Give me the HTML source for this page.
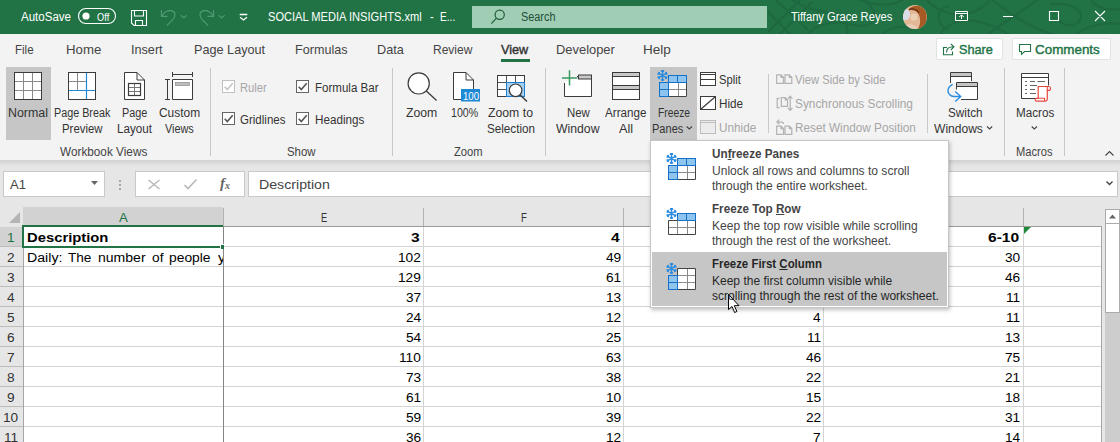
<!DOCTYPE html>
<html><head><meta charset="utf-8">
<style>
*{box-sizing:border-box;margin:0;padding:0}
html,body{width:1120px;height:442px;overflow:hidden;background:#f3f3f3;font-family:"Liberation Sans",sans-serif}
.a{position:absolute}
.x{position:absolute;white-space:nowrap;line-height:20px;transform-origin:0 0}
svg{position:absolute;left:0;top:0}
</style></head><body>
<!-- blocks -->
<div class="a" style="left:0;top:0;width:1120px;height:34px;background:#217346"></div>
<div class="a" style="left:472px;top:6px;width:295px;height:22px;background:#a0ceb5"></div>
<div class="a" style="left:0;top:34px;width:1120px;height:126px;background:#f3f3f3"></div>
<div class="a" style="left:501px;top:59px;width:29px;height:3px;background:#217346"></div>
<div class="a" style="left:936px;top:38px;width:67px;height:22px;background:#fff;border:1px solid #e2e2e2;border-radius:2px"></div>
<div class="a" style="left:1012px;top:38px;width:99px;height:22px;background:#fff;border:1px solid #e2e2e2;border-radius:2px"></div>
<div class="a" style="left:6px;top:67px;width:45px;height:73px;background:#c6c6c6"></div>
<div class="a" style="left:650px;top:67px;width:47px;height:73px;background:#c6c6c6"></div>
<!-- formula bar area -->
<div class="a" style="left:0;top:160px;width:1120px;height:282px;background:#e6e6e6"></div>
<div class="a" style="left:0;top:160px;width:1120px;height:6px;background:linear-gradient(#d0d0d0,#e6e6e6)"></div>
<div class="a" style="left:3px;top:171px;width:102px;height:26px;background:#fff;border:1px solid #c9c9c9"></div>
<div class="a" style="left:135px;top:171px;width:110px;height:26px;background:#fff;border:1px solid #c9c9c9"></div>
<div class="a" style="left:248px;top:171px;width:870px;height:26px;background:#fff;border:1px solid #c9c9c9"></div>
<!-- grid -->
<div class="a" id="grid" style="left:24px;top:227px;width:1078px;height:215px;background:#fff"></div>
<div class="a" style="left:23px;top:207px;width:200px;height:19px;background:#d2d2d2"></div>
<div class="a" style="left:0;top:227px;width:23px;height:19px;background:#d2d2d2"></div>
<div class="a" style="left:24px;top:246px;width:1077px;height:1px;background:#d4d4d4"></div>
<div class="a" style="left:0px;top:246px;width:23px;height:1px;background:#bcbcbc"></div>
<div class="a" style="left:24px;top:266px;width:1077px;height:1px;background:#d4d4d4"></div>
<div class="a" style="left:0px;top:266px;width:23px;height:1px;background:#bcbcbc"></div>
<div class="a" style="left:24px;top:286px;width:1077px;height:1px;background:#d4d4d4"></div>
<div class="a" style="left:0px;top:286px;width:23px;height:1px;background:#bcbcbc"></div>
<div class="a" style="left:24px;top:306px;width:1077px;height:1px;background:#d4d4d4"></div>
<div class="a" style="left:0px;top:306px;width:23px;height:1px;background:#bcbcbc"></div>
<div class="a" style="left:24px;top:326px;width:1077px;height:1px;background:#d4d4d4"></div>
<div class="a" style="left:0px;top:326px;width:23px;height:1px;background:#bcbcbc"></div>
<div class="a" style="left:24px;top:346px;width:1077px;height:1px;background:#d4d4d4"></div>
<div class="a" style="left:0px;top:346px;width:23px;height:1px;background:#bcbcbc"></div>
<div class="a" style="left:24px;top:366px;width:1077px;height:1px;background:#d4d4d4"></div>
<div class="a" style="left:0px;top:366px;width:23px;height:1px;background:#bcbcbc"></div>
<div class="a" style="left:24px;top:386px;width:1077px;height:1px;background:#d4d4d4"></div>
<div class="a" style="left:0px;top:386px;width:23px;height:1px;background:#bcbcbc"></div>
<div class="a" style="left:24px;top:406px;width:1077px;height:1px;background:#d4d4d4"></div>
<div class="a" style="left:0px;top:406px;width:23px;height:1px;background:#bcbcbc"></div>
<div class="a" style="left:24px;top:426px;width:1077px;height:1px;background:#d4d4d4"></div>
<div class="a" style="left:0px;top:426px;width:23px;height:1px;background:#bcbcbc"></div>
<div class="a" style="left:423px;top:227px;width:1px;height:215px;background:#d4d4d4"></div>
<div class="a" style="left:423px;top:208px;width:1px;height:18px;background:#b2b2b2"></div>
<div class="a" style="left:623px;top:227px;width:1px;height:215px;background:#d4d4d4"></div>
<div class="a" style="left:623px;top:208px;width:1px;height:18px;background:#b2b2b2"></div>
<div class="a" style="left:823px;top:227px;width:1px;height:215px;background:#d4d4d4"></div>
<div class="a" style="left:823px;top:208px;width:1px;height:18px;background:#b2b2b2"></div>
<div class="a" style="left:1023px;top:227px;width:1px;height:215px;background:#d4d4d4"></div>
<div class="a" style="left:1023px;top:208px;width:1px;height:18px;background:#b2b2b2"></div>
<div class="a" style="left:23px;top:227px;width:1px;height:215px;background:#a6a6a6"></div>
<div class="a" style="left:22px;top:226px;width:1080px;height:1px;background:#9b9b9b"></div>
<div class="a" style="left:1101px;top:226px;width:1px;height:216px;background:#a6a6a6"></div>
<div class="a" style="left:223px;top:208px;width:1px;height:18px;background:#b2b2b2"></div>
<div class="a" style="left:22px;top:225px;width:201px;height:23px;border:2px solid #217346;border-right:0"></div>
<div class="a" style="left:223px;top:227px;width:1px;height:215px;background:#868686"></div>
<div class="a" style="left:220px;top:244px;width:4px;height:5px;background:#fff"></div>
<div class="a" style="left:221px;top:245px;width:3px;height:4px;background:#217346"></div>
<svg width="8" height="8" style="left:1024px;top:227px"><path d="M0 0H7L0 7Z" fill="#1e8a3c"/></svg>
<div class="a" style="left:1105px;top:209px;width:15px;height:15px;background:#fff;border:1px solid #ababab"></div>
<div class="a" style="left:1105px;top:224px;width:15px;height:89px;background:#fff;border:1px solid #ababab;border-top:0"></div>
<div class="a" style="left:1105px;top:313px;width:15px;height:129px;background:#cdcdcd"></div>
<svg width="1120" height="442" viewBox="0 0 1120 442" fill="none" stroke-linecap="butt">
<defs><clipPath id="tb"><rect x="768" y="0" width="352" height="34"/></clipPath></defs><g clip-path="url(#tb)" stroke="#1b6039" stroke-opacity="0.5" stroke-width="2.2" fill="none"><path d="M764 36L802 -2M778 36L812 2M764 8L792 36M774 -2L808 30M790 -2C800 6 812 10 826 12C845 15 850 28 846 36M806 36C815 24 835 20 850 24C870 30 880 20 872 8C868 2 858 -2 850 -2M880 36C890 26 905 24 912 30M860 -2C875 8 895 6 905 -2M925 -2C935 10 950 16 965 14C985 11 990 -2 990 -2M940 36C945 22 965 18 980 22C1000 27 1010 36 1010 36M948 30C935 24 935 8 950 6M990 -2C1005 10 1030 30 1060 36M1040 -2C1020 12 1000 26 985 36M1050 4C1070 2 1085 10 1080 20C1076 28 1060 26 1058 18M1075 36C1085 26 1100 22 1122 24M1090 -2C1095 8 1110 12 1122 8"/></g>
<g stroke="#fff" stroke-width="1.1">
<rect x="78.5" y="8.5" width="37" height="15" rx="7.5"/>
<circle cx="86" cy="16" r="3.6" fill="#fff" stroke="none"/>
<path d="M131.5 10.5H146.5V25.5H134L131.5 23Z"/><path d="M134.5 10.5V16H143.5V10.5M135.5 25.5V20.5H142.5V25.5"/>
<path d="M239.7 14.5H247.3M240 17.3L243.5 20L247 17.3" stroke-width="1.3"/>
<path d="M1003 16.5H1013M1049.5 11.5H1058.5V20.5H1049.5ZM1095 11L1105 21M1105 11L1095 21"/>
<path d="M955.5 11.5H967.5V20.5H955.5ZM955.5 13.5H967.5M961.5 19V15M959.3 17L961.5 14.8L963.7 17" stroke-width="1"/>
</g>
<g stroke="#4f9a73" stroke-width="1.2">
<path d="M161.5 10.3V16.3H167.5M162 16C164 12.5 167 10.6 170 10.6C173.2 10.6 175 12.6 175 15C175 17 174 18.2 172.5 19.8L166.8 25.6"/>
<path d="M180.8 15.4L183.8 17.8L186.8 15.4"/>
<path d="M213.5 10.3V16.3H207.5M213 16C211 12.5 208 10.6 205 10.6C201.8 10.6 200 12.6 200 15C200 17 201 18.2 202.5 19.8L208.2 25.6"/>
<path d="M218.7 15.4L221.7 17.8L224.7 15.4"/>
</g>
<g stroke="#1e5c3a" stroke-width="1.2"><circle cx="499.7" cy="14.8" r="4.6"/><path d="M496.5 18.2L491.3 23.6"/></g>
<defs><clipPath id="avc"><circle cx="915" cy="17" r="12"/></clipPath></defs>
<g clip-path="url(#avc)"><rect x="903" y="5" width="24" height="24" fill="#e2b896"/><path d="M909 9C912 5 921 4 925 10C928 15 927 24 922 29L918 29C921 24 921 16 917 12C914 10 911 10 909 9Z" fill="#a85a24"/><path d="M903 8C906 8 910 10 910 15C910 19 906 21 903 20Z" fill="#d9dde8"/><path d="M905 26C909 23 915 24 918 29H905Z" fill="#eacdb8"/><circle cx="914" cy="17" r="3.500" fill="#edd0b4"/><path d="M909 10C912 8 917 9 919 13" stroke="#5a2a14" stroke-width="1.2" fill="none"/></g>
<g stroke="#217346" stroke-width="1.1"><path d="M947 47.500H943.500V54.700H952.500V51.500M946.500 52.500C946.500 48.500 949.500 46.800 953.500 46.800M950.800 43.800L954 46.800L950.800 50"/>
<path d="M1019.500 44.500H1030.500V51.500H1024.500L1021.500 54.300V51.500H1019.500Z"/></g>
<g stroke="#c8c8c8" stroke-width="1">
<path d="M210.5 68V156"/>
<path d="M392.5 68V156"/>
<path d="M545.5 68V156"/>
<path d="M1004.5 68V156"/>
<path d="M1064.5 68V156"/>
<path d="M768.5 74V133"/>
<path d="M927.5 74V133"/>
</g>
<path d="M1105.5 155.5L1109.5 151.5L1113.5 155.5" stroke="#444" stroke-width="1.1"/>
<rect x="14.5" y="72.5" width="27" height="27" fill="#fff" stroke="#3b3b3b"/><path d="M23.5 73V99M32.5 73V99M15 81.5H41M15 90.5H41" stroke="#8a8a8a"/>
<rect x="68.5" y="72.5" width="27" height="27" fill="#fff" stroke="#3b3b3b"/><path d="M77.5 73V90M69 81.5H86" stroke="#8a8a8a"/><path d="M86.5 73V99M69 90.5H95" stroke="#1e8ad6" stroke-width="1.2"/>
<path d="M124.5 72.5H137L144.5 80V99.5H124.5Z" fill="#fff" stroke="#3b3b3b"/><path d="M137 72.5V80H144.5" stroke="#3b3b3b"/><path d="M134.500 84V95M129 87.500H140M129 91.500H140" stroke="#777"/><rect x="128.500" y="83.500" width="12" height="12" stroke="#3b3b3b" stroke-width="1.2"/>
<path d="M172.5 79.5H192.5V99.5H172.5Z" fill="#fff" stroke="#3b3b3b"/><rect x="175.500" y="82.500" width="14" height="3" fill="#bdbdbd" stroke="#8a8a8a" stroke-width="0.7"/><path d="M172.500 74.500H192.500M172.500 72V77M192.500 72V77M167.500 79.500V99.500M165 79.500H170M165 99.500H170" stroke="#3b3b3b"/>
<rect x="222.5" y="80.5" width="12" height="12" fill="#fff" stroke="#c0c0c0"/><path d="M224.7 86.7L227.3 89.5L232.7 83.2" stroke="#c4c4c4" stroke-width="1.6"/>
<rect x="296.5" y="80.5" width="12" height="12" fill="#fff" stroke="#666"/><path d="M298.7 86.7L301.3 89.5L306.7 83.2" stroke="#555" stroke-width="1.6"/>
<rect x="222.5" y="112.5" width="12" height="12" fill="#fff" stroke="#666"/><path d="M224.7 118.7L227.3 121.5L232.7 115.2" stroke="#555" stroke-width="1.6"/>
<rect x="296.5" y="112.5" width="12" height="12" fill="#fff" stroke="#666"/><path d="M298.7 118.7L301.3 121.5L306.7 115.2" stroke="#555" stroke-width="1.6"/>
<circle cx="418.7" cy="83.4" r="10.6" fill="#fff" stroke="#3b3b3b" stroke-width="1.2"/><path d="M426.3 91L436.6 100.6" stroke="#3b3b3b" stroke-width="1.3"/>
<path d="M453.500 72.500H466L473.5 80V99.500H453.500Z" fill="#fff" stroke="#3b3b3b"/><path d="M466 72.500V80H473.5" stroke="#3b3b3b"/><rect x="461" y="89" width="19" height="12.5" fill="#1e8ad6"/>
<rect x="497.5" y="75.5" width="27" height="21" fill="#fff" stroke="#3b3b3b"/><path d="M506.500 76V96M515.500 76V82M498 82.500H507M498 89.500H507" stroke="#3b3b3b" stroke-width="0.9"/><rect x="506.500" y="82.500" width="18" height="14" fill="#a6d0f2" stroke="#1e7fd0"/><circle cx="515.6" cy="90.3" r="6.3" fill="#fff" stroke="#3b3b3b" stroke-width="1.2"/><path d="M520.200 95L527 101.600" stroke="#3b3b3b" stroke-width="1.4"/>
<path d="M577 76.500H591.5V96.500H564.5V83" stroke="#3b3b3b" fill="#fff"/><rect x="578.500" y="75" width="13" height="4" fill="#c8c8c8" stroke="#3b3b3b"/><path d="M569.500 70.200V85.400M562 78H577.500" stroke="#3a9a62" stroke-width="1.5"/>
<rect x="612.5" y="72.5" width="27" height="27" fill="#fff" stroke="#3b3b3b"/><rect x="613" y="73" width="26" height="3.500" fill="#c8c8c8"/><rect x="613" y="85.500" width="26" height="3.500" fill="#c8c8c8"/><path d="M613 76.500H639M613 85.500H639M613 89.500H639" stroke="#3b3b3b"/>
<g transform="translate(0 0)"><rect x="669" y="82.5" width="18" height="14.500" fill="#fff"/><path d="M678.500 75.500V97M659.500 89.500H687M669 82.500H687M668.500 82.500V97" stroke="#8a8a8a"/><path d="M659.500 82.500V96.500H686.500V75.500H668.500V82.500Z" stroke="#444"/><rect x="668.500" y="75.500" width="18" height="7" fill="#8fc4ee" stroke="#1572c8"/><path d="M677.500 75.500V82.500" stroke="#1572c8"/><rect x="659.500" y="82.500" width="9" height="14" fill="#8fc4ee" stroke="#1572c8"/><path d="M659.500 89.500H668.500" stroke="#1572c8"/><path d="M662.50 70.10L662.50 80.90M657.82 72.80L667.18 78.20M667.18 72.80L657.82 78.20M665.62 77.30L667.40 76.65M665.62 77.30L665.95 79.17M662.50 79.10L663.96 80.32M662.50 79.10L661.04 80.32M659.38 77.30L659.05 79.17M659.38 77.30L657.60 76.65M659.38 73.70L657.60 74.35M659.38 73.70L659.05 71.83M662.50 71.90L661.04 70.68M662.50 71.90L663.96 70.68M665.62 73.70L665.95 71.83M665.62 73.70L667.40 74.35" stroke="#2b8ce0" stroke-width="1.5"/></g>
<rect x="700.5" y="72.5" width="15" height="13" fill="#fff" stroke="#3b3b3b"/><path d="M701 74.500H715M701 79.500H715" stroke="#3b3b3b"/>
<rect x="700.5" y="96.5" width="15" height="13" fill="#fff" stroke="#3b3b3b"/><path d="M701 109L715 97" stroke="#3b3b3b" stroke-width="1.2"/>
<rect x="700.5" y="120.5" width="15" height="13" fill="#ececec" stroke="#bdbdbd"/><path d="M701 122.500H715" stroke="#bdbdbd"/>
<g stroke="#b4b4b4" stroke-width="1.25"><path d="M776.7 74.8H781.0L783.5 77.3V83.39999999999999H776.7ZM781.0 74.8V77.3H783.5M785 74.8H789.3L791.8 77.3V83.39999999999999H785ZM789.3 74.8V77.3H791.8"/>
<path d="M779.500 98.400H777.200V107.600H779.500M781.3 97.6H785.3L787.5 99.8V106.39999999999999H781.3ZM785.3 97.6V99.8H787.5M790.200 96V110.600M788 98.600L790.200 96.200L792.400 98.600M788 108L790.200 110.400L792.400 108"/>
<path d="M776.7 126H781.0L783.5 128.5V134.4H776.7ZM781.0 126V128.5H783.5M785 126H789.3L791.8 128.5V134.4H785ZM789.3 126V128.5H791.8M777 122H781.500C783 122 783.500 122.800 783.500 124M779.300 119.600L776.900 122L779.300 124.400"/></g>
<path d="M950.500 83V72.500H971.500V81" fill="#fff" stroke="#3b3b3b"/><rect x="951" y="73" width="20" height="3" fill="#c4c4c4"/><path d="M951 76.500H971" stroke="#3b3b3b"/><rect x="956.500" y="82.500" width="21" height="17" fill="#fff" stroke="none"/><rect x="957" y="83" width="20" height="3" fill="#c4c4c4"/><path d="M956.500 89.500V82.500H977.500V99.500H961M957 86.500H977" stroke="#3b3b3b"/>
<path d="M952.600 84.400C949.500 86 948 88.500 948 90.800C948 94 950.500 96.500 954 96.500H960M955.300 91.500L960.700 96.500L955.300 101.400" stroke="#2b8ce0" stroke-width="1.4"/>
<path d="M686.600 126.500L689.300 129L692 126.500M987 126.500L989.600 129L992.200 126.500M1031.700 126.500L1034.300 129L1037 126.500" stroke="#444" stroke-width="1.1"/>
<rect x="1021.500" y="73.500" width="27" height="25" fill="#fff" stroke="none"/><path d="M1035 98.500H1021.500V73.500H1048.500V85.500M1022 77.500H1048" stroke="#3b3b3b"/><path d="M1025 81.500H1027M1030 81.500H1035M1037.500 81.500H1045M1025 85.500H1027M1030 85.500H1037M1025 89.500H1027M1030 89.500H1035M1025 93.500H1027M1030 93.500H1036" stroke="#666"/>
<path d="M1038.200 86.500H1049C1051 86.500 1051 90.400 1049 90.400H1047.300V99C1047.300 101.300 1044.500 101.200 1044.500 101.200H1036.500C1034.800 101.200 1034.800 98.300 1036.500 98.300H1038.200Z" fill="#fff" stroke="#e8463c" stroke-width="1.2"/><path d="M1038.200 98.300H1044.600V101M1047.300 86.700V90.400" stroke="#e8463c" stroke-width="1.1"/>
<path d="M91 181H98L94.500 185Z" fill="#666"/>
<path d="M119 180H121V182H119ZM119 184H121V186H119ZM119 188H121V190H119Z" fill="#a6a6a6"/>
<path d="M148.500 180L159.500 189M159.500 180L148.500 189" stroke="#b8b8b8" stroke-width="1.5"/>
<path d="M184.500 185L188 188.500L196.500 179.500" stroke="#b8b8b8" stroke-width="1.6"/>
<path d="M1106.500 181.500L1109.500 184.500L1112.500 181.500" stroke="#444" stroke-width="1.4"/>
<path d="M20 212V223H9Z" fill="#b4b4b4"/>
<path d="M1109 218.500H1116L1112.500 214.500Z" fill="#666"/>
</svg>
<div class="a" style="left:650px;top:140px;width:299px;height:168px;background:#fff;border:1px solid #c6c6c6;box-shadow:1px 2px 4px rgba(0,0,0,0.25)"></div>
<div class="a" style="left:652px;top:252px;width:295px;height:54px;background:#c6c6c6"></div>
<svg width="1120" height="442" viewBox="0 0 1120 442" fill="none">
<g transform="translate(9 83)"><rect x="669" y="82.5" width="18" height="14.500" fill="#fff"/><path d="M678.500 75.500V97M659.500 89.500H687M669 82.500H687M668.500 82.500V97" stroke="#8a8a8a"/><path d="M659.500 82.500V96.500H686.500V75.500H668.500V82.500Z" stroke="#444"/><rect x="668.500" y="75.500" width="18" height="7" fill="#8fc4ee" stroke="#1572c8"/><path d="M677.500 75.500V82.500" stroke="#1572c8"/><rect x="659.500" y="82.500" width="9" height="14" fill="#8fc4ee" stroke="#1572c8"/><path d="M659.500 89.500H668.500" stroke="#1572c8"/><path d="M662.50 70.10L662.50 80.90M657.82 72.80L667.18 78.20M667.18 72.80L657.82 78.20M665.62 77.30L667.40 76.65M665.62 77.30L665.95 79.17M662.50 79.10L663.96 80.32M662.50 79.10L661.04 80.32M659.38 77.30L659.05 79.17M659.38 77.30L657.60 76.65M659.38 73.70L657.60 74.35M659.38 73.70L659.05 71.83M662.50 71.90L661.04 70.68M662.50 71.90L663.96 70.68M665.62 73.70L665.95 71.83M665.62 73.70L667.40 74.35" stroke="#2b8ce0" stroke-width="1.5"/></g>
<g transform="translate(9 138)"><rect x="669" y="82.5" width="18" height="14.500" fill="#fff"/><rect x="659.500" y="82.500" width="9.500" height="14.500" fill="#fff"/><path d="M678.500 75.500V97M659.500 89.500H687M669 82.500H687M668.500 82.500V97" stroke="#8a8a8a"/><path d="M659.500 82.500V96.500H686.500V75.500H668.500V82.500Z" stroke="#444"/><rect x="668.500" y="75.500" width="18" height="7" fill="#8fc4ee" stroke="#1572c8"/><path d="M677.500 75.500V82.500" stroke="#1572c8"/><path d="M662.50 70.10L662.50 80.90M657.82 72.80L667.18 78.20M667.18 72.80L657.82 78.20M665.62 77.30L667.40 76.65M665.62 77.30L665.95 79.17M662.50 79.10L663.96 80.32M662.50 79.10L661.04 80.32M659.38 77.30L659.05 79.17M659.38 77.30L657.60 76.65M659.38 73.70L657.60 74.35M659.38 73.70L659.05 71.83M662.50 71.90L661.04 70.68M662.50 71.90L663.96 70.68M665.62 73.70L665.95 71.83M665.62 73.70L667.40 74.35" stroke="#2b8ce0" stroke-width="1.5"/></g>
<g transform="translate(9 193)"><rect x="669" y="82.5" width="18" height="14.500" fill="#fff"/><rect x="669" y="75.500" width="18" height="7" fill="#fff"/><path d="M678.500 75.500V97M659.500 89.500H687M669 82.500H687M668.500 82.500V97" stroke="#8a8a8a"/><path d="M659.500 82.500V96.500H686.500V75.500H668.500V82.500Z" stroke="#444"/><rect x="659.500" y="82.500" width="9" height="14" fill="#8fc4ee" stroke="#1572c8"/><path d="M659.500 89.500H668.500" stroke="#1572c8"/><path d="M662.50 70.10L662.50 80.90M657.82 72.80L667.18 78.20M667.18 72.80L657.82 78.20M665.62 77.30L667.40 76.65M665.62 77.30L665.95 79.17M662.50 79.10L663.96 80.32M662.50 79.10L661.04 80.32M659.38 77.30L659.05 79.17M659.38 77.30L657.60 76.65M659.38 73.70L657.60 74.35M659.38 73.70L659.05 71.83M662.50 71.90L661.04 70.68M662.50 71.90L663.96 70.68M665.62 73.70L665.95 71.83M665.62 73.70L667.40 74.35" stroke="#2b8ce0" stroke-width="1.5"/></g>
<path d="M728.500 294.300V309.500L732 306.500L734.600 312.500L736.900 311.500L734.300 305.700H739Z" fill="#fff" stroke="#000" stroke-width="1" stroke-linejoin="miter"/>
</svg>
<span class="x" style="left:21.00px;top:7.00px;font-size:12.5px;color:#ffffff;transform:scaleX(0.9216)">AutoSave</span>
<span class="x" style="left:97.00px;top:6.50px;font-size:11px;color:#ffffff;transform:scaleX(0.8434)">Off</span>
<span class="x" style="left:268.00px;top:7.00px;font-size:12.5px;color:#ffffff;transform:scaleX(0.8873)">SOCIAL MEDIA INSIGHTS.xml</span>
<span class="x" style="left:430.00px;top:7.00px;font-size:12.5px;color:#ffffff;transform:scaleX(0.8750)">-</span>
<span class="x" style="left:439.69px;top:7.00px;font-size:12.5px;color:#ffffff;transform:scaleX(0.8100)">E...</span>
<span class="x" style="left:521.00px;top:7.00px;font-size:12.5px;color:#1e4e36;transform:scaleX(0.8700)">Search</span>
<span class="x" style="left:790.60px;top:7.00px;font-size:12.5px;color:#ffffff;transform:scaleX(0.8948)">Tiffany Grace Reyes</span>
<span class="x" style="left:14.61px;top:40.00px;font-size:13px;color:#444444;transform:scaleX(0.8875)">File</span>
<span class="x" style="left:66.48px;top:40.00px;font-size:13px;color:#444444;transform:scaleX(1.0165)">Home</span>
<span class="x" style="left:131.03px;top:40.00px;font-size:13px;color:#444444;transform:scaleX(0.9718)">Insert</span>
<span class="x" style="left:193.53px;top:40.00px;font-size:13px;color:#444444;transform:scaleX(0.9739)">Page Layout</span>
<span class="x" style="left:294.53px;top:40.00px;font-size:13px;color:#444444;transform:scaleX(0.9688)">Formulas</span>
<span class="x" style="left:376.53px;top:40.00px;font-size:13px;color:#444444;transform:scaleX(0.9732)">Data</span>
<span class="x" style="left:433.08px;top:40.00px;font-size:13px;color:#444444;transform:scaleX(0.9234)">Review</span>
<span class="x" style="left:556.01px;top:40.00px;font-size:13px;color:#444444;transform:scaleX(0.9928)">Developer</span>
<span class="x" style="left:643.46px;top:40.00px;font-size:13px;color:#444444;transform:scaleX(1.0390)">Help</span>
<span class="x" style="left:501.20px;top:40.00px;font-size:13px;color:#333;transform:scaleX(0.9736);-webkit-text-stroke:0.4px #333">View</span>
<span class="x" style="left:959.20px;top:40.00px;font-size:13px;color:#217346;transform:scaleX(0.9750);-webkit-text-stroke:0.4px #217346">Share</span>
<span class="x" style="left:1035.20px;top:40.00px;font-size:13px;color:#217346;transform:scaleX(1.0308);-webkit-text-stroke:0.4px #217346">Comments</span>
<span class="x" style="left:8.20px;top:103.00px;font-size:12px;color:#333333;transform:scaleX(1.0341)">Normal</span>
<span class="x" style="left:53.50px;top:103.00px;font-size:12px;color:#333333;transform:scaleX(0.8979)">Page Break</span>
<span class="x" style="left:62.00px;top:119.00px;font-size:12px;color:#333333;transform:scaleX(0.9485)">Preview</span>
<span class="x" style="left:122.40px;top:103.00px;font-size:12px;color:#333333;transform:scaleX(0.9029)">Page</span>
<span class="x" style="left:117.00px;top:119.00px;font-size:12px;color:#333333;transform:scaleX(0.9702)">Layout</span>
<span class="x" style="left:158.50px;top:103.00px;font-size:12px;color:#333333;transform:scaleX(0.9940)">Custom</span>
<span class="x" style="left:164.80px;top:119.00px;font-size:12px;color:#333333;transform:scaleX(0.9059)">Views</span>
<span class="x" style="left:314.50px;top:78.00px;font-size:12px;color:#333333;transform:scaleX(0.9618)">Formula Bar</span>
<span class="x" style="left:240.40px;top:110.00px;font-size:12px;color:#333333;transform:scaleX(0.9609)">Gridlines</span>
<span class="x" style="left:314.50px;top:110.00px;font-size:12px;color:#333333;transform:scaleX(0.9724)">Headings</span>
<span class="x" style="left:406.00px;top:103.00px;font-size:12px;color:#333333;transform:scaleX(1.0203)">Zoom</span>
<span class="x" style="left:451.00px;top:103.00px;font-size:12px;color:#333333;transform:scaleX(0.8833)">100%</span>
<span class="x" style="left:488.30px;top:103.00px;font-size:12px;color:#333333;transform:scaleX(1.0216)">Zoom to</span>
<span class="x" style="left:487.00px;top:119.00px;font-size:12px;color:#333333;transform:scaleX(0.9714)">Selection</span>
<span class="x" style="left:566.70px;top:103.00px;font-size:12px;color:#333333;transform:scaleX(0.9491)">New</span>
<span class="x" style="left:556.00px;top:119.00px;font-size:12px;color:#333333;transform:scaleX(1.0183)">Window</span>
<span class="x" style="left:605.00px;top:103.00px;font-size:12px;color:#333333;transform:scaleX(0.9694)">Arrange</span>
<span class="x" style="left:619.40px;top:119.00px;font-size:12px;color:#333333;transform:scaleX(1.0576)">All</span>
<span class="x" style="left:657.70px;top:103.00px;font-size:12px;color:#333333;transform:scaleX(0.8574)">Freeze</span>
<span class="x" style="left:652.00px;top:119.00px;font-size:12px;color:#333333;transform:scaleX(0.9199)">Panes</span>
<span class="x" style="left:719.40px;top:70.00px;font-size:12px;color:#333333;transform:scaleX(0.9330)">Split</span>
<span class="x" style="left:719.40px;top:94.00px;font-size:12px;color:#333333;transform:scaleX(0.9758)">Hide</span>
<span class="x" style="left:947.50px;top:103.00px;font-size:12px;color:#333333;transform:scaleX(0.9778)">Switch</span>
<span class="x" style="left:934.30px;top:119.00px;font-size:12px;color:#333333;transform:scaleX(1.0045)">Windows</span>
<span class="x" style="left:1015.70px;top:103.00px;font-size:12px;color:#333333;transform:scaleX(0.9736)">Macros</span>
<span class="x" style="left:240.40px;top:78.00px;font-size:12px;color:#a6a6a6;transform:scaleX(0.9345)">Ruler</span>
<span class="x" style="left:719.40px;top:118.00px;font-size:12px;color:#a6a6a6;transform:scaleX(0.9804)">Unhide</span>
<span class="x" style="left:795.30px;top:70.00px;font-size:12px;color:#a6a6a6;transform:scaleX(0.9367)">View Side by Side</span>
<span class="x" style="left:795.30px;top:94.00px;font-size:12px;color:#a6a6a6;transform:scaleX(0.9880)">Synchronous Scrolling</span>
<span class="x" style="left:795.30px;top:118.00px;font-size:12px;color:#a6a6a6;transform:scaleX(0.9795)">Reset Window Position</span>
<span class="x" style="left:60.00px;top:142.00px;font-size:12px;color:#444444;transform:scaleX(0.9817)">Workbook Views</span>
<span class="x" style="left:287.00px;top:142.00px;font-size:12px;color:#444444;transform:scaleX(0.9489)">Show</span>
<span class="x" style="left:454.00px;top:142.00px;font-size:12px;color:#444444;transform:scaleX(0.9323)">Zoom</span>
<span class="x" style="left:1016.40px;top:142.00px;font-size:12px;color:#444444;transform:scaleX(0.9278)">Macros</span>
<span class="x" style="left:712.40px;top:144.00px;font-size:12px;color:#444444;transform:scaleX(0.9766);font-weight:700">Un<u>f</u>reeze Panes</span>
<span class="x" style="left:711.90px;top:161.00px;font-size:12px;color:#444444;transform:scaleX(1.0037)">Unlock all rows and columns to scroll</span>
<span class="x" style="left:711.90px;top:176.00px;font-size:12px;color:#444444;transform:scaleX(1.0013)">through the entire worksheet.</span>
<span class="x" style="left:712.40px;top:199.00px;font-size:12px;color:#444444;transform:scaleX(0.9718);font-weight:700">Freeze Top <u>R</u>ow</span>
<span class="x" style="left:711.90px;top:216.00px;font-size:12px;color:#444444;transform:scaleX(1.0012)">Keep the top row visible while scrolling</span>
<span class="x" style="left:711.90px;top:231.00px;font-size:12px;color:#444444;transform:scaleX(1.0023)">through the rest of the worksheet.</span>
<span class="x" style="left:712.40px;top:254.00px;font-size:12px;color:#262626;transform:scaleX(0.9528);font-weight:700">Freeze First <u>C</u>olumn</span>
<span class="x" style="left:711.90px;top:271.00px;font-size:12px;color:#262626;transform:scaleX(1.0005)">Keep the first column visible while</span>
<span class="x" style="left:711.90px;top:286.00px;font-size:12px;color:#262626;transform:scaleX(1.0036)">scrolling through the rest of the worksheet.</span>
<span class="x" style="left:10.00px;top:175.00px;font-size:13px;color:#444;transform:scaleX(1.0019)">A1</span>
<span class="x" style="left:259.41px;top:175.00px;font-size:13px;color:#444;transform:scaleX(1.0894)">Description</span>
<span class="x" style="left:119.10px;top:208.00px;font-size:12px;color:#217346;transform:scaleX(1.1000)">A</span>
<span class="x" style="left:320.90px;top:208.00px;font-size:12px;color:#333333;transform:scaleX(0.7750)">E</span>
<span class="x" style="left:520.80px;top:208.00px;font-size:12px;color:#333333;transform:scaleX(0.8000)">F</span>
<span class="x" style="left:6.81px;top:227.50px;font-size:12px;color:#217346;transform:scaleX(1.1400)">1</span>
<span class="x" style="left:6.81px;top:247.50px;font-size:12px;color:#333333;transform:scaleX(1.1400)">2</span>
<span class="x" style="left:6.81px;top:267.50px;font-size:12px;color:#333333;transform:scaleX(1.1400)">3</span>
<span class="x" style="left:6.81px;top:287.50px;font-size:12px;color:#333333;transform:scaleX(1.1400)">4</span>
<span class="x" style="left:6.81px;top:307.50px;font-size:12px;color:#333333;transform:scaleX(1.1400)">5</span>
<span class="x" style="left:6.81px;top:327.50px;font-size:12px;color:#333333;transform:scaleX(1.1400)">6</span>
<span class="x" style="left:6.81px;top:347.50px;font-size:12px;color:#333333;transform:scaleX(1.1400)">7</span>
<span class="x" style="left:6.81px;top:367.50px;font-size:12px;color:#333333;transform:scaleX(1.1400)">8</span>
<span class="x" style="left:6.81px;top:387.50px;font-size:12px;color:#333333;transform:scaleX(1.1400)">9</span>
<span class="x" style="left:3.41px;top:407.50px;font-size:12px;color:#333333;transform:scaleX(1.1400)">10</span>
<span class="x" style="left:3.91px;top:427.50px;font-size:12px;color:#333333;transform:scaleX(1.1400)">11</span>
<span class="x" style="left:27.10px;top:227.50px;font-size:12px;color:#000;transform:scaleX(1.2332);font-weight:700">Description</span>
<span class="x" style="left:26.60px;top:247.50px;font-size:12px;color:#000;transform:scaleX(1.1796)">Daily:</span>
<span class="x" style="left:68.40px;top:247.50px;font-size:12px;color:#000;transform:scaleX(1.1331)">The</span>
<span class="x" style="left:98.40px;top:247.50px;font-size:12px;color:#000;transform:scaleX(1.1698)">number</span>
<span class="x" style="left:151.80px;top:247.50px;font-size:12px;color:#000;transform:scaleX(1.1430)">of</span>
<span class="x" style="left:169.40px;top:247.50px;font-size:12px;color:#000;transform:scaleX(1.1523)">people</span>
<div class="a" style="left:200px;top:247.50px;width:23px;height:20px;overflow:hidden"><span class="x" style="left:17.80px;top:0;font-size:12px;color:#000;transform:scaleX(1.2000)">your</span></div>
<span class="x" style="left:411.10px;top:227.50px;font-size:12px;color:#000;transform:scaleX(1.3000);font-weight:700">3</span>
<span class="x" style="left:398.00px;top:247.50px;font-size:12px;color:#000;transform:scaleX(1.1400)">102</span>
<span class="x" style="left:398.00px;top:267.50px;font-size:12px;color:#000;transform:scaleX(1.1400)">129</span>
<span class="x" style="left:405.61px;top:287.50px;font-size:12px;color:#000;transform:scaleX(1.1400)">37</span>
<span class="x" style="left:405.61px;top:307.50px;font-size:12px;color:#000;transform:scaleX(1.1400)">24</span>
<span class="x" style="left:405.61px;top:327.50px;font-size:12px;color:#000;transform:scaleX(1.1400)">54</span>
<span class="x" style="left:399.02px;top:347.50px;font-size:12px;color:#000;transform:scaleX(1.1400)">110</span>
<span class="x" style="left:405.61px;top:367.50px;font-size:12px;color:#000;transform:scaleX(1.1400)">73</span>
<span class="x" style="left:405.61px;top:387.50px;font-size:12px;color:#000;transform:scaleX(1.1400)">61</span>
<span class="x" style="left:405.61px;top:407.50px;font-size:12px;color:#000;transform:scaleX(1.1400)">59</span>
<span class="x" style="left:405.61px;top:427.50px;font-size:12px;color:#000;transform:scaleX(1.1400)">36</span>
<span class="x" style="left:611.10px;top:227.50px;font-size:12px;color:#000;transform:scaleX(1.3000);font-weight:700">4</span>
<span class="x" style="left:605.61px;top:247.50px;font-size:12px;color:#000;transform:scaleX(1.1400)">49</span>
<span class="x" style="left:605.61px;top:267.50px;font-size:12px;color:#000;transform:scaleX(1.1400)">61</span>
<span class="x" style="left:605.61px;top:287.50px;font-size:12px;color:#000;transform:scaleX(1.1400)">13</span>
<span class="x" style="left:605.61px;top:307.50px;font-size:12px;color:#000;transform:scaleX(1.1400)">12</span>
<span class="x" style="left:605.61px;top:327.50px;font-size:12px;color:#000;transform:scaleX(1.1400)">25</span>
<span class="x" style="left:605.61px;top:347.50px;font-size:12px;color:#000;transform:scaleX(1.1400)">63</span>
<span class="x" style="left:605.61px;top:367.50px;font-size:12px;color:#000;transform:scaleX(1.1400)">38</span>
<span class="x" style="left:605.61px;top:387.50px;font-size:12px;color:#000;transform:scaleX(1.1400)">10</span>
<span class="x" style="left:605.61px;top:407.50px;font-size:12px;color:#000;transform:scaleX(1.1400)">39</span>
<span class="x" style="left:605.61px;top:427.50px;font-size:12px;color:#000;transform:scaleX(1.1400)">12</span>
<span class="x" style="left:813.22px;top:307.50px;font-size:12px;color:#000;transform:scaleX(1.1400)">4</span>
<span class="x" style="left:806.63px;top:327.50px;font-size:12px;color:#000;transform:scaleX(1.1400)">11</span>
<span class="x" style="left:805.61px;top:347.50px;font-size:12px;color:#000;transform:scaleX(1.1400)">46</span>
<span class="x" style="left:805.61px;top:367.50px;font-size:12px;color:#000;transform:scaleX(1.1400)">22</span>
<span class="x" style="left:805.61px;top:387.50px;font-size:12px;color:#000;transform:scaleX(1.1400)">15</span>
<span class="x" style="left:805.61px;top:407.50px;font-size:12px;color:#000;transform:scaleX(1.1400)">22</span>
<span class="x" style="left:813.22px;top:427.50px;font-size:12px;color:#000;transform:scaleX(1.1400)">7</span>
<span class="x" style="left:988.05px;top:227.50px;font-size:12px;color:#000;transform:scaleX(1.3000);font-weight:700">6-10</span>
<span class="x" style="left:1005.11px;top:247.50px;font-size:12px;color:#000;transform:scaleX(1.1400)">30</span>
<span class="x" style="left:1005.11px;top:267.50px;font-size:12px;color:#000;transform:scaleX(1.1400)">46</span>
<span class="x" style="left:1006.13px;top:287.50px;font-size:12px;color:#000;transform:scaleX(1.1400)">11</span>
<span class="x" style="left:1006.13px;top:307.50px;font-size:12px;color:#000;transform:scaleX(1.1400)">11</span>
<span class="x" style="left:1005.11px;top:327.50px;font-size:12px;color:#000;transform:scaleX(1.1400)">13</span>
<span class="x" style="left:1005.11px;top:347.50px;font-size:12px;color:#000;transform:scaleX(1.1400)">75</span>
<span class="x" style="left:1005.11px;top:367.50px;font-size:12px;color:#000;transform:scaleX(1.1400)">21</span>
<span class="x" style="left:1005.11px;top:387.50px;font-size:12px;color:#000;transform:scaleX(1.1400)">18</span>
<span class="x" style="left:1005.11px;top:407.50px;font-size:12px;color:#000;transform:scaleX(1.1400)">31</span>
<span class="x" style="left:1005.11px;top:427.50px;font-size:12px;color:#000;transform:scaleX(1.1400)">14</span>
<span class="x" style="left:462.60px;top:86.00px;font-size:11px;color:#fff;transform:scaleX(0.8719)">100</span>
<span class="x" style="left:220px;top:173px;font-family:'Liberation Serif',serif;font-style:italic;font-weight:700;font-size:15px;color:#666">f<span style="font-size:10px;position:relative;top:1px">x</span></span>
</body></html>
